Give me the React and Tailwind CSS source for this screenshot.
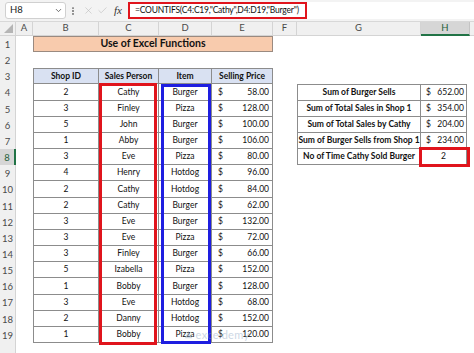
import { ChevronDown, EllipsisVertical, X, Check } from 'lucide-react';

const sales = [
  [2, 'Cathy', 'Burger', '58.00'],
  [3, 'Finley', 'Pizza', '128.00'],
  [5, 'John', 'Burger', '100.00'],
  [1, 'Abby', 'Burger', '106.00'],
  [3, 'Eve', 'Pizza', '80.00'],
  [4, 'Henry', 'Hotdog', '96.00'],
  [2, 'Cathy', 'Hotdog', '84.00'],
  [2, 'Cathy', 'Burger', '62.00'],
  [3, 'Eve', 'Burger', '132.00'],
  [3, 'Eve', 'Pizza', '72.00'],
  [3, 'Finley', 'Burger', '66.00'],
  [5, 'Izabella', 'Pizza', '152.00'],
  [1, 'Bobby', 'Burger', '128.00'],
  [3, 'Eve', 'Hotdog', '68.00'],
  [2, 'Danny', 'Hotdog', '152.00'],
  [1, 'Bobby', 'Pizza', '120.00'],
];

const summary = [
  ['Sum of Burger Sells', '652.00'],
  ['Sum of Total Sales in Shop 1', '354.00'],
  ['Sum of Total Sales by Cathy', '204.00'],
  ['Sum of Burger Sells from Shop 1', '234.00'],
  ['No of Time Cathy Sold Burger', null],
];

const letters = ['A', 'B', 'C', 'D', 'E', 'F', 'G', 'H'];

const colHead = 'bg-[#f0f0f0] border-r border-b border-[#d4d4d4] flex items-center justify-center text-[9.5px] text-[#4a4a4a]';
const rowHead = 'bg-[#f0f0f0] border-r border-[#d4d4d4] flex items-center justify-center pt-[2px] text-[9.5px] text-[#4a4a4a]';
// table cell base, alignment added per cell
const cell = 'border-r border-b border-[#8c8c8c] flex items-center text-[8.5px] text-[#111]';
const tc = `${cell} justify-center`;
const money = `${cell} justify-between`;

function FormulaBar() {
  return (
    <div className="h-[22px] bg-[#f3f3f3] border-b border-[#d8d8d8] flex items-center">
      <div className="ml-[5px] w-[61px] h-[17px] bg-white border border-[#d0d0d0] rounded-[3px] flex items-center justify-between pl-[4px] pr-[2px]">
        <span className="text-[9.5px] text-[#222]">H8</span>
        <ChevronDown size={9} strokeWidth={2} className="text-[#444]" />
      </div>
      <EllipsisVertical size={10} strokeWidth={2.5} className="ml-[2px] text-[#666]" />
      <X size={11} strokeWidth={1.2} className="ml-[5px] text-[#b8b8b8]" />
      <Check size={11} strokeWidth={1.2} className="ml-[3px] text-[#b8b8b8]" />
      <span className="ml-[6px] text-[11px] italic text-[#333] [font-family:'Liberation_Serif',serif]">fx</span>
      <div className="ml-[6px] flex-1 self-stretch my-[2px] bg-white flex items-center">
        <div className="h-full flex items-center border-2 border-[#e0141c] pl-[5px] pr-[6px]">
          <span className="text-[8.5px] tracking-[-0.2px] text-[#111] whitespace-nowrap">=COUNTIFS(C4:C19,"Cathy",D4:D19,"Burger")</span>
        </div>
      </div>
    </div>
  );
}

function Sheet() {
  const cells = [];

  cells.push(
    <div key="corner" className="bg-[#f0f0f0] border-r border-b border-[#d4d4d4] flex items-end justify-end p-[2px]">
      <svg width="9" height="9" viewBox="0 0 9 9"><polygon points="9,0 9,9 0,9" fill="#b5b5b5" /></svg>
    </div>
  );
  letters.forEach((l) =>
    cells.push(
      l === 'H' ? (
        <div key={l} className="bg-[#d6d6d6] border-r border-b-2 border-r-[#c4c4c4] border-b-[#217346] flex items-center justify-center text-[9.5px] text-[#1f5f3a]">{l}</div>
      ) : (
        <div key={l} className={colHead}>{l}</div>
      )
    )
  );
  cells.push(<div key="hx" className="bg-[#f0f0f0] border-b border-[#d4d4d4]" />);

  for (let r = 1; r <= 20; r++) {
    if (r === 8) {
      cells.push(<div key={`rh${r}`} className="bg-[#d6d6d6] border-r-2 border-[#217346] flex items-center justify-center pt-[2px] text-[9.5px] text-[#1f5f3a]">{r}</div>);
    } else if (r === 20) {
      cells.push(<div key={`rh${r}`} className="bg-[#f0f0f0] border-r border-[#d4d4d4]" />);
    } else {
      cells.push(<div key={`rh${r}`} className={rowHead}>{r}</div>);
    }
    cells.push(<div key={`a${r}`} />);

    if (r === 1) {
      cells.push(
        <div key="title" className="col-span-4 bg-[#f8cbad] border border-[#9a8a80] flex items-center justify-center text-[10.5px] font-bold text-[#111]">
          Use of Excel Functions
        </div>
      );
    } else if (r === 3) {
      cells.push(<div key="h1" className={`${tc} border-l border-t bg-[#d9e1f2] font-bold`}>Shop ID</div>);
      cells.push(<div key="h2" className={`${tc} border-t bg-[#d9e1f2] font-bold`}>Sales Person</div>);
      cells.push(<div key="h3" className={`${tc} border-t bg-[#d9e1f2] font-bold`}>Item</div>);
      cells.push(<div key="h4" className={`${tc} border-t bg-[#d9e1f2] font-bold`}>Selling Price</div>);
    } else if (r >= 4 && r <= 19) {
      const [id, name, item, price] = sales[r - 4];
      cells.push(<div key={`b${r}`} className={`${tc} border-l`}>{id}</div>);
      cells.push(<div key={`c${r}`} className={tc}>{name}</div>);
      cells.push(<div key={`d${r}`} className={tc}>{item}</div>);
      cells.push(
        <div key={`e${r}`} className={`${money} pl-[6px] pr-[3px]`}>
          <span>$</span>
          <span>{price}</span>
        </div>
      );
    } else {
      cells.push(<div key={`b${r}`} />, <div key={`c${r}`} />, <div key={`d${r}`} />, <div key={`e${r}`} />);
    }

    cells.push(<div key={`f${r}`} />);

    if (r >= 4 && r <= 8) {
      const [label, value] = summary[r - 4];
      cells.push(
        <div key={`g${r}`} className={`${tc} border-l font-bold whitespace-nowrap ${r === 4 ? 'border-t' : ''}`}>{label}</div>
      );
      cells.push(
        value ? (
          <div key={`h${r}`} className={`${money} pl-[5px] pr-[2px] mr-[3px] ${r === 4 ? 'border-t' : ''}`}>
            <span>$</span>
            <span>{value}</span>
          </div>
        ) : (
          <div key={`h${r}`} className={`${tc} mr-[3px]`}>2</div>
        )
      );
    } else {
      cells.push(<div key={`g${r}`} />, <div key={`h${r}`} />);
    }
    cells.push(<div key={`x${r}`} />);
  }

  return (
    <div className="relative grid grid-cols-[16px_17px_66px_60px_53px_61px_24px_124px_49px_1fr] grid-rows-[14px_repeat(20,16.16px)]">
      {cells}
      <div className="absolute col-start-4 col-end-5 row-start-5 row-end-21 left-0 right-[2px] top-[-1px] bottom-[-2px] border-[3px] border-[#e0141c]" />
      <div className="absolute col-start-5 col-end-6 row-start-5 row-end-21 left-[2px] right-[1px] top-0 bottom-[-1px] border-[3px] border-[#1e1ee0]" />
      <div className="absolute col-start-9 col-end-10 row-start-9 row-end-10 left-[-2px] right-0 top-[-2px] bottom-[-2px] border-[3px] border-[#e0141c]" />
      <div className="absolute col-start-5 col-end-7 row-start-20 row-end-21 inset-0 flex items-center justify-center gap-[2px] pointer-events-none opacity-40">
        <svg width="11" height="11" viewBox="0 0 12 12"><path d="M2 10 L6 2 L10 10 Z" fill="#8fa9c4" /></svg>
        <span className="text-[11px] text-[#7f9dbd] tracking-[0.3px]">exceldemy</span>
      </div>
    </div>
  );
}

export default function App() {
  return (
    <div className="w-[474px] h-[353px] overflow-hidden bg-white [font-family:Lato,'Liberation_Sans',sans-serif]">
      <FormulaBar />
      <Sheet />
    </div>
  );
}
